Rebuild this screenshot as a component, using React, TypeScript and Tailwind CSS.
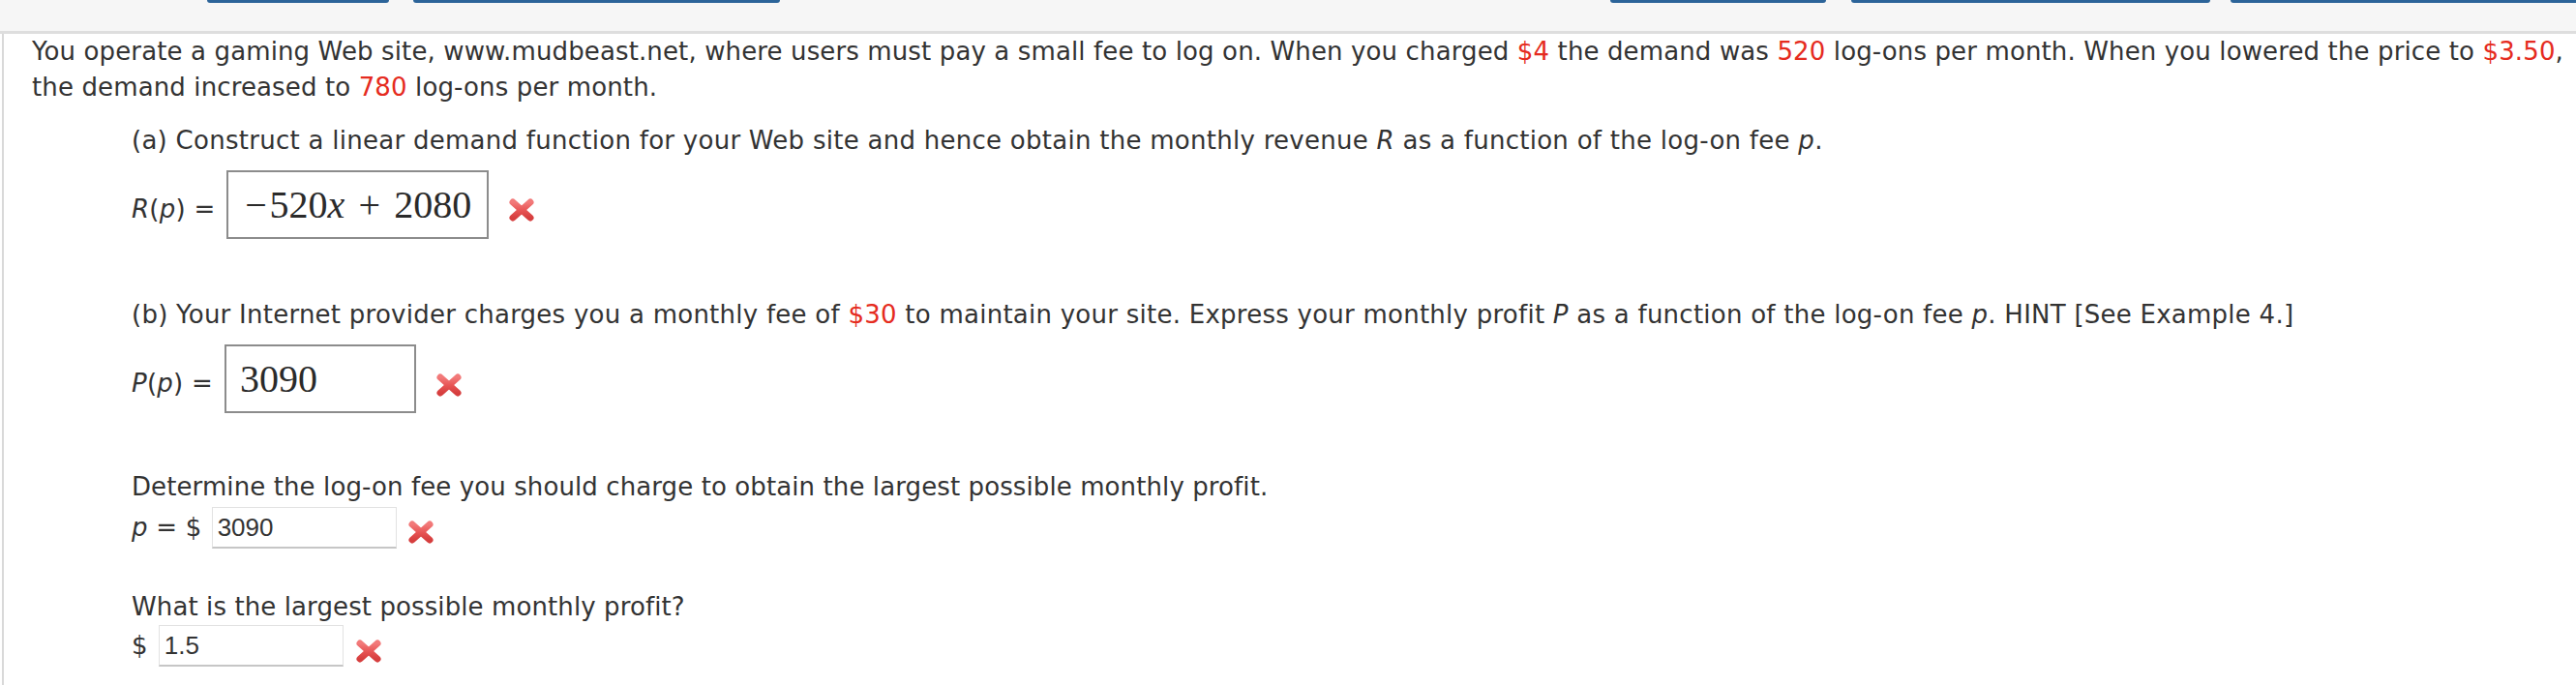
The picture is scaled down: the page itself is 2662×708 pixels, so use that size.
import React from "react";

const RED = "text-[#e52b20]";

function XMark({ className = "" }: { className?: string }) {
  return (
    <svg
      className={className}
      width="28"
      height="26"
      viewBox="0 0 28 26"
      aria-hidden="true"
    >
      <defs>
        <linearGradient id="xg" x1="0" y1="0" x2="0" y2="1">
          <stop offset="0" stopColor="#f27a7a" />
          <stop offset="0.5" stopColor="#e85656" />
          <stop offset="1" stopColor="#d63e3e" />
        </linearGradient>
      </defs>
      <g stroke="url(#xg)" strokeWidth="7" strokeLinecap="round">
        <line x1="5" y1="5" x2="23" y2="21" />
        <line x1="23" y1="5" x2="5" y2="21" />
      </g>
    </svg>
  );
}

function TextInput({ value }: { value: string }) {
  return (
    <div className="w-[191px] h-[43px] border border-[#e2e2e2] border-b-2 border-b-[#c6c6c6] bg-white flex items-center pl-[5px] text-[26px] text-[#333] font-['Liberation_Sans',Arial,sans-serif] leading-none tracking-normal">
      {value}
    </div>
  );
}

export default function App() {
  return (
    <div className="w-[2662px] h-[708px] bg-white overflow-hidden font-['DejaVu_Sans',Verdana,sans-serif] text-[26px] leading-[37px] tracking-[0.25px] text-[#333]">
      {/* header strip */}
      <div className="h-[35px] bg-[#f6f6f6] border-b-[3px] border-[#dedede] flex items-start">
        <div className="ml-[214px] w-[188px] h-[3px] bg-[#2c6499] rounded-b-[3px]" />
        <div className="ml-[25px] w-[379px] h-[3px] bg-[#2c6499] rounded-b-[3px]" />
        <div className="ml-[858px] w-[223px] h-[3px] bg-[#2c6499] rounded-b-[3px]" />
        <div className="ml-[26px] w-[371px] h-[3px] bg-[#2c6499] rounded-b-[3px]" />
        <div className="ml-[21px] flex-1 h-[3px] bg-[#2c6499] rounded-bl-[3px]" />
      </div>

      <div className="ml-[2px] border-l-2 border-[#d9d9d9] h-[673px] pl-[29px]">
        <p className="whitespace-nowrap tracking-[0.125px]">
          You operate a gaming Web site, www.mudbeast.net, where users must pay a small fee to log on. When you charged{" "}
          <span className={RED}>$4</span> the demand was <span className={RED}>520</span> log-ons per month. When you
          lowered the price to <span className={RED}>$3.50</span>,
          <br />
          the demand increased to <span className={RED}>780</span> log-ons per month.
        </p>

        <div className="ml-[103px]">
          {/* (a) */}
          <p className="mt-[18px] whitespace-nowrap tracking-[0.27px]">
            (a) Construct a linear demand function for your Web site and hence obtain the monthly revenue <i>R</i> as a
            function of the log-on fee <i>p</i>.
          </p>
          <div className="mt-[12px] flex items-baseline">
            <span className="whitespace-nowrap">
              <i>R</i>(<i>p</i>) =
            </span>
            <div className="ml-[12px] h-[71px] min-w-[198px] border-2 border-[#8c8c8c] pl-[14px] pr-[16px] flex items-center font-['Liberation_Serif','Times_New_Roman',serif] text-[40px] leading-[44px] tracking-normal text-[#2a2a2a] whitespace-nowrap">
              <span>
                <span className="inline-block w-[28px] text-center">−</span>520<i>x</i>
                <span className="inline-block w-[31px] mx-[10px] text-center">+</span>2080
              </span>
            </div>
            <XMark className="ml-[20px] self-end mb-[17px]" />
          </div>

          {/* (b) */}
          <p className="mt-[60px] whitespace-nowrap">
            (b) Your Internet provider charges you a monthly fee of <span className={RED}>$30</span> to maintain your
            site. Express your monthly profit <i>P</i> as a function of the log-on fee <i>p</i>. HINT [See Example 4.]
          </p>
          <div className="mt-[12px] flex items-baseline">
            <span className="whitespace-nowrap">
              <i>P</i>(<i>p</i>) =
            </span>
            <div className="ml-[12px] h-[71px] w-[198px] border-2 border-[#8c8c8c] px-[14px] flex items-center font-['Liberation_Serif','Times_New_Roman',serif] text-[40px] leading-[44px] tracking-normal text-[#2a2a2a] whitespace-nowrap">
              <span>3090</span>
            </div>
            <XMark className="ml-[20px] self-end mb-[16px]" />
          </div>

          {/* maximize */}
          <p className="mt-[58px] whitespace-nowrap tracking-[0.1px]">
            Determine the log-on fee you should charge to obtain the largest possible monthly profit.
          </p>
          <div className="mt-[2px] flex items-center">
            <span className="whitespace-nowrap">
              <i>p</i> = $
            </span>
            <div className="ml-[10px]">
              <TextInput value="3090" />
            </div>
            <XMark className="ml-[11px] mt-[9px]" />
          </div>

          <p className="mt-[42px] whitespace-nowrap tracking-[0.1px]">What is the largest possible monthly profit?</p>
          <div className="flex items-center">
            <span>$</span>
            <div className="ml-[11px]">
              <TextInput value="1.5" />
            </div>
            <XMark className="ml-[12px] mt-[10px]" />
          </div>
        </div>
      </div>
    </div>
  );
}
